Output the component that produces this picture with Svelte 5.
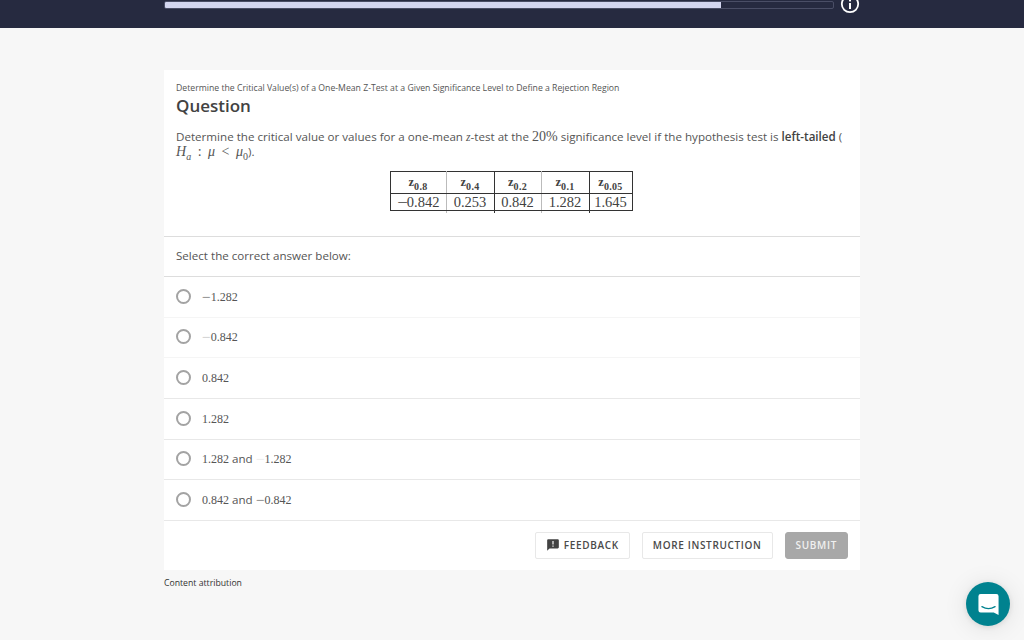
<script>
	const heads = [['0.8', 55], ['0.4', 47], ['0.2', 46], ['0.1', 47], ['0.05', 42]];
	const values = ['0.253', '0.842', '1.282', '1.645'];
	const options = [
		[{ m: '1.282', minus: 'dark' }],
		[{ m: '0.842', minus: 'light' }],
		[{ m: '0.842' }],
		[{ m: '1.282' }],
		[{ m: '1.282' }, { t: ' and ' }, { m: '1.282', minus: 'ghost' }],
		[{ m: '0.842' }, { t: ' and ' }, { m: '0.842', minus: 'dark' }]
	];
</script>

<header class="topbar">
	<div class="progress"><div class="fill"></div></div>
	<svg class="info" width="20" height="20" viewBox="0 0 20 20" aria-hidden="true">
		<circle cx="10" cy="10" r="8.2" fill="none" stroke="#fff" stroke-width="1.8" />
		<rect x="9" y="9" width="2" height="6" fill="#fff" />
		<rect x="9" y="5.4" width="2" height="2" fill="#fff" />
	</svg>
</header>

<main class="page">
	<section class="card">
		<div class="question">
			<div class="crumb">Determine the Critical Value(s) of a One-Mean Z-Test at a Given Significance Level to Define a Rejection Region</div>
			<h1>Question</h1>
			<p class="prompt">
				Determine the critical value or values for a one-mean <i class="math">z</i>-test at the <span class="math big">20%</span> significance level if the hypothesis test is <b>left-tailed</b> (
				<span class="math big"><i>H<sub>a</sub></i> <span class="rel">:</span> <i>μ</i> <span class="rel">&lt;</span> <i>μ</i><sub>0</sub></span>).
			</p>
			<div class="table-wrap">
				<table>
					<tbody>
						<tr>
							{#each heads as [sub, w]}
								<th style="width: {w}px"><b>z</b><sub>{sub}</sub></th>
							{/each}
						</tr>
						<tr>
							<td><span class="minus">−</span>0.842</td>
							{#each values as v}
								<td>{v}</td>
							{/each}
						</tr>
						<tr class="tail">
							<td></td>
							{#each values as v}
								<td></td>
							{/each}
						</tr>
					</tbody>
				</table>
			</div>
		</div>

		<div class="select">Select the correct answer below:</div>

		{#each options as parts}
			<label class="option">
				<span class="radio"></span>
				<span class="answer">
					{#each parts as part}
						{#if part.m}
							<span class="math">{#if part.minus}<span class="minus {part.minus}">−</span>{/if}{part.m}</span>
						{:else}
							{part.t}
						{/if}
					{/each}
				</span>
			</label>
		{/each}

		<div class="actions">
			<button class="btn">
				<svg width="14" height="14" viewBox="0 0 24 24" aria-hidden="true">
					<path fill="#424242" d="M20 2H4c-1.100 0-2 .9-2 2v18l4-4h14c1.100 0 2-.9 2-2V4c0-1.100-.9-2-2-2zm-7 9h-2V5h2v6zm0 4h-2v-2h2v2z" />
				</svg>
				FEEDBACK
			</button>
			<button class="btn">MORE INSTRUCTION</button>
			<button class="btn submit">SUBMIT</button>
		</div>
	</section>
	<div class="attribution">Content attribution</div>
</main>

<button class="chat" aria-label="Chat">
	<svg width="21" height="23" viewBox="0 0 24 26" aria-hidden="true">
		<path fill="#fff" d="M3 1h18a2.500 2.500 0 0 1 2.500 2.500V25l-5.500-3H3a2.500 2.500 0 0 1-2.500-2.500v-16A2.500 2.500 0 0 1 3 1z" />
		<path fill="none" stroke="#00828f" stroke-width="1.500" stroke-linecap="round" d="M4.500 15.500c4.500 2.700 10.500 2.700 15 0" />
	</svg>
</button>

<style>
	:global(body) {
		background: #f7f7f7;
		font-family: 'Open Sans', sans-serif;
		color: #424242;
	}

	.topbar {
		height: 28px;
		background: #262a40;
		overflow: hidden;
		display: flex;
		align-items: flex-start;
		padding-left: 164px;
	}

	.progress {
		width: 668px;
		height: 6px;
		margin-top: 1px;
		border: 1px solid #4a4e66;
		border-radius: 2px;
		overflow: hidden;
	}

	.fill {
		width: 556px;
		height: 100%;
		background: #d3d6f0;
	}

	.info {
		margin: -6px 0 0 6px;
	}

	.page {
		width: 696px;
		margin-left: 164px;
		padding-top: 42px;
	}

	.card {
		background: #fff;
		height: 500px;
		display: flex;
		flex-direction: column;
	}

	.question {
		height: 154px;
		padding: 12px 12px 0;
		border-bottom: 1px solid #ddd;
		flex: none;
	}

	.crumb {
		font-size: 8.700px;
		line-height: 13px;
		color: #555;
	}

	h1 {
		margin: -1px 0 0;
		font-size: 17px;
		line-height: 23px;
		font-weight: 600;
		color: #424242;
	}

	.prompt {
		margin: 13px 0 0;
		font-size: 11.620px;
		line-height: 14px;
		color: #555;
	}

	.prompt b {
		font-weight: 600;
		color: #424242;
	}

	.math {
		font-family: 'Liberation Serif', serif;
	}

	.big {
		font-size: 14px;
		line-height: 1;
	}

	.math sub {
		font-size: 10px;
		line-height: 0;
	}

	.rel {
		margin: 0 3px;
	}

	.minus {
		display: inline-block;
		margin-right: 2px;
		transform: scaleX(1.3);
		transform-origin: left center;
	}

	.minus.light {
		color: #bbb;
	}

	.minus.ghost {
		color: #e4e4e4;
	}

	.table-wrap {
		margin-top: 12px;
		display: flex;
		justify-content: center;
	}

	table {
		width: 243px;
		border-collapse: collapse;
		table-layout: fixed;
		font-family: 'Liberation Serif', serif;
		font-size: 14.500px;
		color: #424242;
		margin-left: -2px;
	}

	th,
	td {
		padding: 0;
		text-align: center;
		border: 1px solid #333;
		border-right-color: #bbb;
		font-weight: 400;
	}

	th:nth-child(2),
	td:nth-child(2),
	th:nth-child(4),
	td:nth-child(4),
	th:last-child,
	td:last-child {
		border-right-color: #333;
	}

	th {
		height: 21px;
		font-size: 12.500px;
	}

	th sub {
		font-size: 10px;
		font-weight: 700;
		letter-spacing: 0.3px;
		line-height: 0;
	}

	tr:nth-child(2) td {
		height: 16px;
		line-height: 16px;
	}

	.tail td {
		height: 2px;
		border-bottom: none;
	}

	.tail td:first-child,
	.tail td:last-child {
		border-left: none;
		border-right: none;
	}

	.tail td:first-child {
		border-right: 1px solid #bbb;
	}

	.select {
		height: 39px;
		line-height: 38px;
		padding-left: 12px;
		font-size: 11.600px;
		color: #555;
		border-bottom: 1px solid #ddd;
		flex: none;
	}

	.option {
		height: 39.670px;
		display: flex;
		align-items: center;
		gap: 11px;
		padding-left: 12px;
		font-size: 11.600px;
		color: #555;
		border-bottom: 1px solid #e8e8e8;
		flex: none;
	}

	.option:nth-of-type(1),
	.option:nth-of-type(2) {
		border-bottom-color: #f5f5f5;
	}

	.radio {
		width: 11px;
		height: 11px;
		margin-top: -1px;
		border: 2px solid #a3a3a3;
		border-radius: 50%;
		flex: none;
	}

	.answer {
		white-space: pre-wrap;
	}

	.answer .math {
		font-size: 12px;
	}

	.actions {
		flex: 1;
		display: flex;
		justify-content: flex-end;
		align-items: center;
		gap: 12px;
		padding-right: 12px;
	}

	.btn {
		height: 27px;
		padding: 0 10px;
		background: #fff;
		border: 1px solid #e8e8e8;
		border-radius: 2px;
		font-family: inherit;
		font-size: 10px;
		font-weight: 600;
		letter-spacing: 0.66px;
		color: #4a4a4a;
		display: flex;
		align-items: center;
		gap: 4px;
	}

	.submit {
		background: #a8a8a8;
		border-color: #a8a8a8;
		color: #f0f0f0;
		border-radius: 3px;
	}

	.attribution {
		margin-top: 7px;
		font-size: 8.700px;
		line-height: 13px;
		color: #333;
	}

	.chat {
		position: fixed;
		right: 14px;
		bottom: 14px;
		width: 44px;
		height: 44px;
		border: none;
		border-radius: 50%;
		background: #00828f;
		padding: 0;
		display: flex;
		align-items: center;
		justify-content: center;
		box-shadow: 0 1px 6px rgba(0, 0, 0, 0.1), 0 2px 24px rgba(0, 0, 0, 0.1);
	}
</style>
